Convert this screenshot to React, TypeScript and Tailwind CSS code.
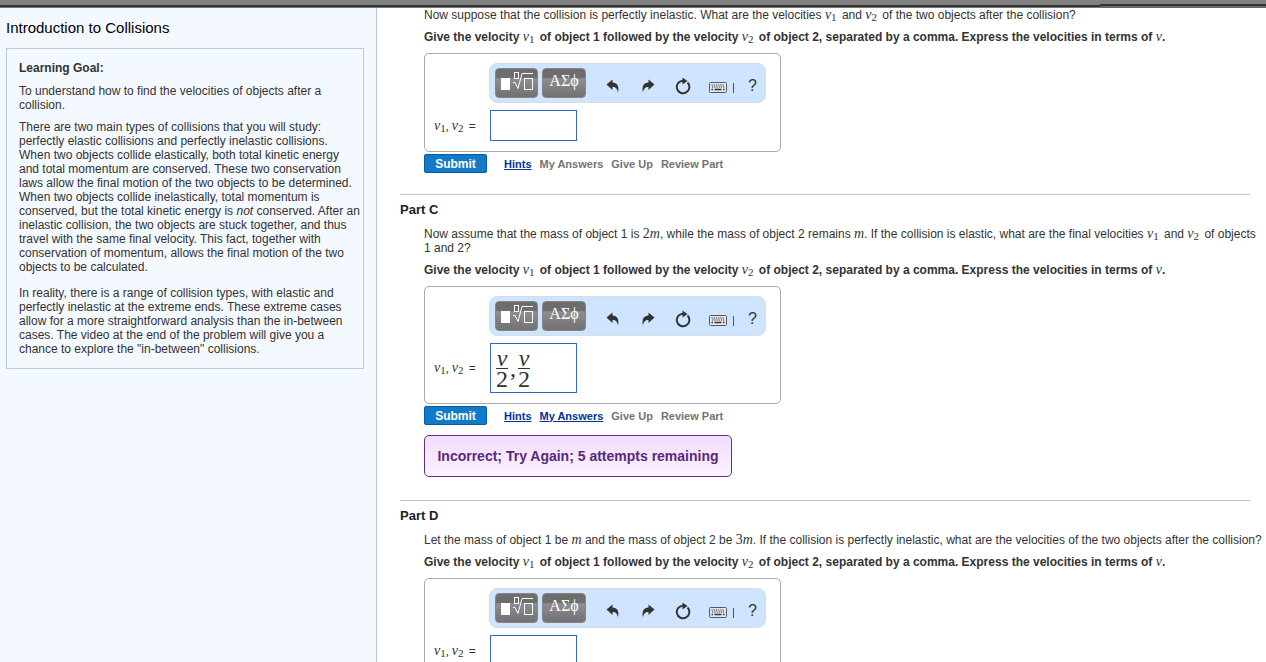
import type { ReactNode } from "react";

const GOAL_PARAGRAPHS: ReactNode[] = [
  "To understand how to find the velocities of objects after a collision.",
  <>
    There are two main types of collisions that you will study: perfectly elastic collisions
    and perfectly inelastic collisions. When two objects collide elastically, both total
    kinetic energy and total momentum are conserved. These two conservation laws allow the
    final motion of the two objects to be determined. When two objects collide inelastically,
    total momentum is conserved, but the total kinetic energy is <em>not</em> conserved. After
    an inelastic collision, the two objects are stuck together, and thus travel with the same
    final velocity. This fact, together with conservation of momentum, allows the final motion
    of the two objects to be calculated.
  </>,
  'In reality, there is a range of collision types, with elastic and perfectly inelastic at the extreme ends. These extreme cases allow for a more straightforward analysis than the in-between cases. The video at the end of the problem will give you a chance to explore the "in-between" collisions.',
];

const MATH = "font-['Liberation_Serif',serif] font-normal leading-0 text-[14px]";

function V({ sub }: { sub?: number }) {
  return (
    <span className={`${MATH} ${sub ? "mr-0.5" : ""}`}>
      <i>v</i>
      {sub ? <span className="relative top-0.5 text-[11px]">{sub}</span> : null}
    </span>
  );
}

function M({ times }: { times?: number }) {
  return (
    <span className={MATH}>
      {times}
      <i>m</i>
    </span>
  );
}

function Fraction({ top, bottom }: { top: string; bottom: string }) {
  return (
    <span className="flex flex-col items-center">
      <i className="w-3 border-b border-[#333] text-center leading-5">{top}</i>
      <span className="leading-5">{bottom}</span>
    </span>
  );
}

const TOOL = "flex w-[35px] items-center justify-center pt-1.5 text-[#333]";

function Toolbar() {
  const template =
    "flex h-[30px] shrink-0 justify-center rounded border border-[#858585] bg-linear-to-b from-[#6d6d6d] from-30% via-[#8e8e93] via-35% to-[#717171] text-white";
  return (
    <div
      role="toolbar"
      aria-label="Math tools"
      className="flex h-10 w-[277px] items-center rounded-lg border border-[#d9dde2] bg-[#cfe5ff] pl-[5px]"
    >
      <button type="button" aria-label="Templates" className={`${template} w-[43px]`}>
        <svg width="35" height="28" viewBox="0 0 35 28" fill="none" stroke="currentColor">
          <rect x="2" y="9" width="9" height="12" fill="currentColor" stroke="none" />
          <rect x="15.5" y="3.5" width="4" height="6" />
          <path d="M14 13.5h2l3 6 4-15h11" />
          <rect x="25.5" y="9.5" width="8" height="11" />
        </svg>
      </button>
      <button
        type="button"
        className={`${template} ml-1 w-11 font-['Liberation_Serif',serif] text-[16px] leading-[24px]`}
      >
        ΑΣϕ
      </button>
      <span className="ml-[9px] flex">
        <button type="button" aria-label="Undo" className={TOOL}>
          <svg width="14" height="14" viewBox="0 0 14 14" fill="currentColor">
            <path d="M0.5 5.5 6.5 0.5v3c4.5 0 7 3.5 5.5 10C11.5 10 10 8 6.5 8v3z" />
          </svg>
        </button>
        <button type="button" aria-label="Redo" className={TOOL}>
          <svg width="14" height="14" viewBox="0 0 14 14" fill="currentColor">
            <path d="M13.5 5.5 7.5 0.5v3c-4.5 0-7 3.5-5.5 10C2.5 10 4 8 7.5 8v3z" />
          </svg>
        </button>
        <button type="button" aria-label="Reset" className={TOOL}>
          <svg width="16" height="18" viewBox="0 0 16 18" fill="none" stroke="currentColor">
            <path d="M12.5 5.5A6.3 6.3 0 1 1 8.5 3.7" strokeWidth="2" />
            <path d="M7.5 0.5 12.5 4 7.5 7.5z" fill="currentColor" stroke="none" />
          </svg>
        </button>
        <button type="button" aria-label="Keyboard" className={`${TOOL} pt-2.5`}>
          <svg width="18" height="12" viewBox="0 0 18 12" fill="none" stroke="currentColor">
            <rect x="0.5" y="0.5" width="17" height="10" rx="1" fill="#e3e8f0" stroke="#55585e" />
            <path d="M2.5 3h13M3 5h13" strokeDasharray="1.2 1" />
            <path d="M2.5 7.5h1.5M5.5 7.5h7M14 7.5h1.5" strokeWidth="1.4" />
          </svg>
        </button>
        <span className="-ml-0.5 mt-[13px] h-2.5 w-px bg-[#555]" />
        <button
          type="button"
          aria-label="Help"
          className="ml-1 w-[29px] pt-1.5 text-center text-[16px] leading-5"
        >
          ?
        </button>
      </span>
    </div>
  );
}

function Answer({ id, children }: { id: string; children?: ReactNode }) {
  return (
    <div className="w-[357px] rounded-[5px] border border-[#aaa] pt-[9px] pr-3.5 pb-2.5 pl-2">
      <div className="ml-14">
        <Toolbar />
      </div>
      <div className="mt-[7px] flex items-center">
        <label id={`${id}-label`} htmlFor={id} className="w-[57px] pl-px whitespace-nowrap">
          <V sub={1} />
          <span className="-ml-0.5 font-['Liberation_Serif',serif]">, </span>
          <V sub={2} /> =
        </label>
        {children ? (
          <div
            id={id}
            role="textbox"
            tabIndex={0}
            aria-labelledby={`${id}-label`}
            className="flex h-[50px] w-[87px] items-center border border-[#3366cc] pl-[5px] font-['Liberation_Serif',serif] text-[24px]"
          >
            {children}
          </div>
        ) : (
          <input id={id} type="text" className="h-[31px] w-[87px] border border-[#3366cc] px-1" />
        )}
      </div>
    </div>
  );
}

function Actions({ answered }: { answered?: boolean }) {
  const link = "text-[#003399] underline";
  return (
    <div className="mt-0.5 flex items-center text-[11px] font-bold text-[#737373]">
      <button
        type="button"
        className="mr-[17px] h-[19px] w-[63px] rounded-xs border border-[#0a5c9e] bg-[#117bc9] text-[12px] leading-none text-white"
      >
        Submit
      </button>
      <div className="flex gap-2">
        <a href="#hints" className={link}>
          Hints
        </a>
        <a href="#answers" className={answered ? link : ""}>
          My Answers
        </a>
        <a href="#give-up">Give Up</a>
        <a href="#review">Review Part</a>
      </div>
    </div>
  );
}

function Part({
  id,
  title,
  question,
  answer,
  feedback,
}: {
  id: string;
  title?: string;
  question: ReactNode;
  answer?: ReactNode;
  feedback?: string;
}) {
  return (
    <section>
      {title ? (
        <>
          <hr className="mr-4 border-[#c4c4c4]" />
          <h2 className="mt-[7px] mb-2.5 text-[13px] leading-[15px] font-bold text-[#222]">
            {title}
          </h2>
        </>
      ) : null}
      <div className="pb-[21px] pl-6">
        <p>{question}</p>
        <p className="mt-2 mb-[9px] font-bold">
          Give the velocity <V sub={1} /> of object 1 followed by the velocity <V sub={2} /> of
          object 2, separated by a comma. Express the velocities in terms of <V />.
        </p>
        <Answer id={id}>{answer}</Answer>
        <Actions answered={Boolean(answer)} />
        {feedback ? (
          <div
            role="status"
            className="mt-2.5 mb-0.5 flex h-[42px] w-[308px] items-center justify-center rounded-[5px] border border-[#6b2a85] bg-linear-to-b from-[#f1dcff] to-[#fdf2ff] text-[14px] font-bold whitespace-nowrap text-[#57297a]"
          >
            {feedback}
          </div>
        ) : null}
      </div>
    </section>
  );
}

export default function App() {
  return (
    <div className="flex h-screen flex-col overflow-hidden bg-white font-['Liberation_Sans',Arial,sans-serif] text-[12px] leading-[14px] text-[#333]">
      <header className="flex shrink-0">
        <div className="h-2 grow border-b border-[#777] bg-linear-to-b from-[#808080] from-70% to-[#333] to-75%" />
        <div className="h-2 w-[166px] border-b-2 border-[#666] bg-linear-to-b from-[#808080] from-65% to-[#333] to-70%" />
      </header>
      <div className="flex min-h-0 grow">
        <aside className="w-[377px] shrink-0 border-r border-[#b5cddf] bg-[#f4f8ff] pt-2.5 pr-3 pl-1.5">
          <h1 className="text-[15px] leading-5 text-black">Introduction to Collisions</h1>
          <div className="mt-2.5 border border-[#b5cddf] pt-3 pr-0.5 pb-3 pl-3">
            <h2 className="font-bold">Learning Goal:</h2>
            <div className="mt-[9px] flex flex-col gap-2">
              {GOAL_PARAGRAPHS.map((text, i) => (
                <p key={i} className="last:mt-1">
                  {text}
                </p>
              ))}
            </div>
          </div>
        </aside>
        <main className="min-w-0 grow overflow-hidden pl-[23px]">
          <Part
            id="part-b"
            question={
              <>
                Now suppose that the collision is perfectly inelastic. What are the velocities{" "}
                <V sub={1} /> and <V sub={2} /> of the two objects after the collision?
              </>
            }
          />
          <Part
            id="part-c"
            title="Part C"
            question={
              <>
                Now assume that the mass of object 1 is <M times={2} />, while the mass of object 2
                remains <M />. If the collision is elastic, what are the final velocities{" "}
                <V sub={1} /> and <V sub={2} /> of objects 1&nbsp;and&nbsp;2?
              </>
            }
            answer={
              <>
                <Fraction top="v" bottom="2" />
                <span className="w-2.5 text-center leading-none">,</span>
                <Fraction top="v" bottom="2" />
              </>
            }
            feedback="Incorrect; Try Again; 5 attempts remaining"
          />
          <Part
            id="part-d"
            title="Part D"
            question={
              <>
                Let the mass of object 1 be <M /> and the mass of object 2 be <M times={3} />. If
                the collision is perfectly inelastic, what are the velocities of the two objects
                after the collision?
              </>
            }
          />
        </main>
      </div>
    </div>
  );
}
